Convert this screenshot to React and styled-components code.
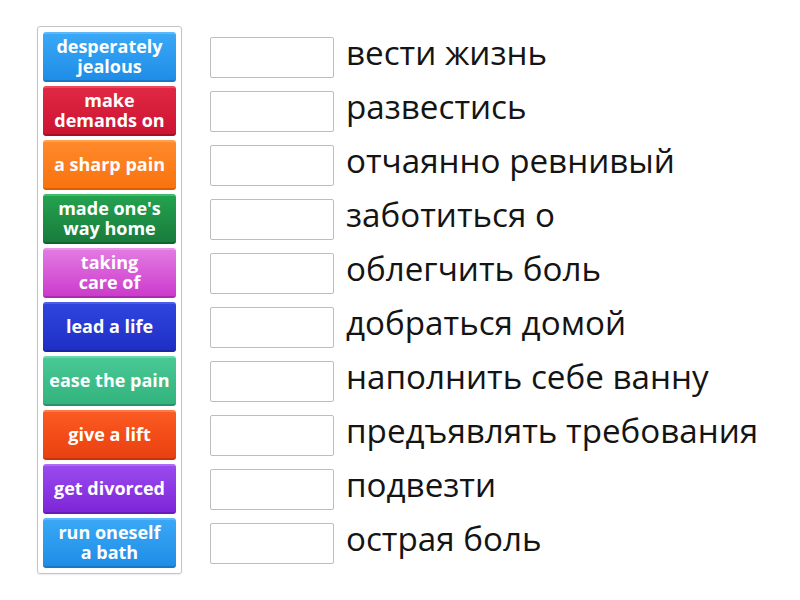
import React from 'react';
import styled, {createGlobalStyle} from 'styled-components';

const GlobalStyle = createGlobalStyle`
  html, body {
    margin: 0;
    padding: 0;
    background: #ffffff;
  }
  body {
    font-family: "Open Sans", "Liberation Sans", sans-serif;
  }
`;

const Page = styled.div`
  width: 800px;
  height: 600px;
  box-sizing: border-box;
  padding: 26px 0 0 37px;
  display: flex;
  align-items: flex-start;
  gap: 28px;
`;

const Panel = styled.div`
  display: flex;
  flex-direction: column;
  gap: 4px;
  padding: 5px;
  border: 1px solid #c4c4c4;
  border-radius: 3px;
  box-shadow: 0 1px 2px rgba(0, 0, 0, 0.08);
`;

const Tile = styled.div`
  width: 133px;
  height: 50px;
  box-sizing: border-box;
  display: flex;
  align-items: center;
  justify-content: center;
  text-align: center;
  color: #ffffff;
  font-weight: 700;
  font-size: 18px;
  line-height: 20px;
  border-radius: 3px;
  background: linear-gradient(${p => p.$top}, ${p => p.$bottom});
  border-top: 2px solid ${p => p.$edge};
  border-bottom: 2px solid ${p => p.$shade};
  padding: 0 0 2px;
  white-space: nowrap;
`;

const Rows = styled.div`
  display: flex;
  flex-direction: column;
  gap: 4px;
  padding-top: 6px;
`;

const Row = styled.div`
  height: 50px;
  display: flex;
  align-items: center;
  gap: 12px;
`;

const Box = styled.div`
  width: 122px;
  height: 39px;
  background: #ffffff;
  border: 1px solid #bdbdbd;
  border-radius: 2px;
  flex-shrink: 0;
`;

const Label = styled.span`
  font-size: 33.2px;
  color: #141414;
  white-space: nowrap;
  line-height: 1;
  padding-bottom: 8px;
`;

const tiles = [
  {lines: ['desperately', 'jealous'], top: '#3aa8f6', bottom: '#1f8de6', edge: '#5cb8fa', shade: '#1777c8'},
  {lines: ['make', 'demands on'], top: '#e02844', bottom: '#cc1433', edge: '#ea4a60', shade: '#a80e28'},
  {lines: ['a sharp pain'], top: '#ff8a2a', bottom: '#f9730f', edge: '#ffa052', shade: '#d85f08'},
  {lines: ["made one's", 'way home'], top: '#24a24f', bottom: '#187c3c', edge: '#3cbf68', shade: '#126330'},
  {lines: ['taking', 'care of'], top: '#e27ae3', bottom: '#cc3bcc', edge: '#ea94ea', shade: '#ad2aad'},
  {lines: ['lead a life'], top: '#2f45de', bottom: '#1f2fc4', edge: '#4a5ee8', shade: '#1a26a3'},
  {lines: ['ease the pain'], top: '#48c894', bottom: '#33b37e', edge: '#6ad8ab', shade: '#279468'},
  {lines: ['give a lift'], top: '#fb5a22', bottom: '#ea4010', edge: '#ff7a4a', shade: '#c8340a'},
  {lines: ['get divorced'], top: '#9a4aee', bottom: '#7d26d8', edge: '#ae6cf5', shade: '#671cb8'},
  {lines: ['run oneself', 'a bath'], top: '#3aa8f6', bottom: '#1f8de6', edge: '#5cb8fa', shade: '#1777c8'},
];

const labels = [
  'вести жизнь',
  'развестись',
  'отчаянно ревнивый',
  'заботиться о',
  'облегчить боль',
  'добраться домой',
  'наполнить себе ванну',
  'предъявлять требования',
  'подвезти',
  'острая боль',
];

export default function App() {
  return (
    <>
      <GlobalStyle/>
      <Page>
        <Panel>
          {tiles.map(t => (
            <Tile key={t.lines.join(' ')} $top={t.top} $bottom={t.bottom} $edge={t.edge} $shade={t.shade}>
              <span>
                {t.lines.map((l, i) => (
                  <React.Fragment key={l}>
                    {i > 0 && <br/>}
                    {l}
                  </React.Fragment>
                ))}
              </span>
            </Tile>
          ))}
        </Panel>
        <Rows>
          {labels.map(l => (
            <Row key={l}>
              <Box/>
              <Label>{l}</Label>
            </Row>
          ))}
        </Rows>
      </Page>
    </>
  );
}
